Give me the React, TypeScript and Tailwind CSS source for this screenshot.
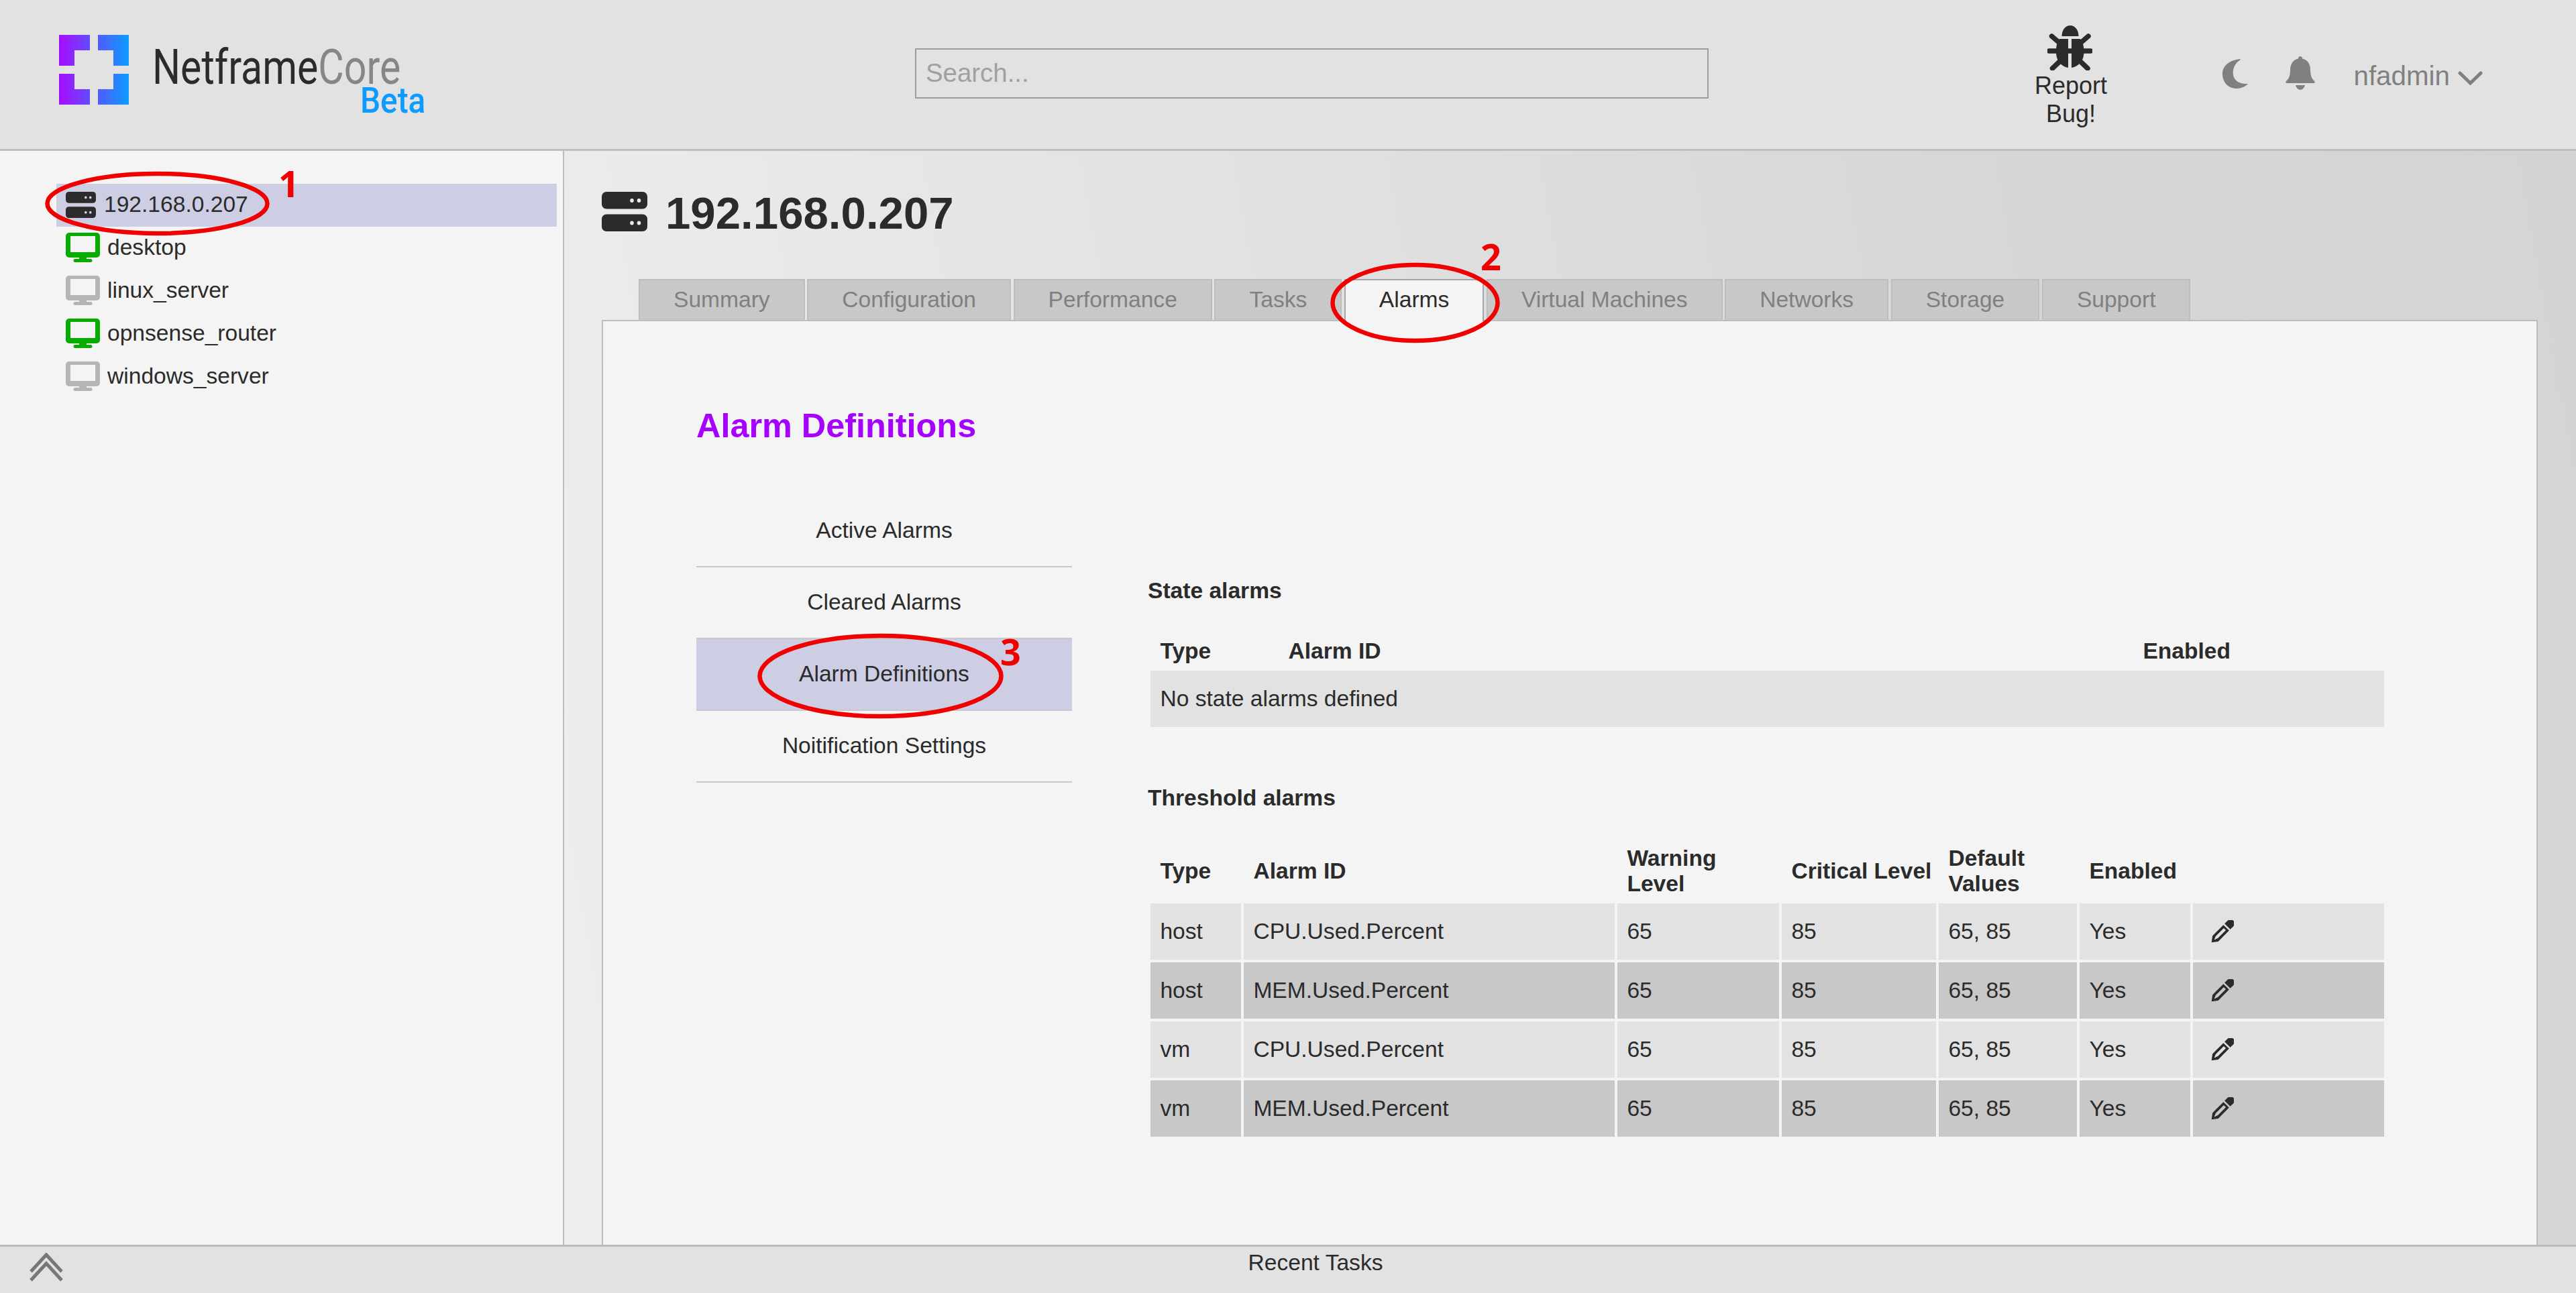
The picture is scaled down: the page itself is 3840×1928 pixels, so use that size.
import React from 'react';

const tabs = ['Summary', 'Configuration', 'Performance', 'Tasks', 'Alarms', 'Virtual Machines', 'Networks', 'Storage', 'Support'];
const hosts = [
  { name: 'desktop', color: 'text-[#06ad00]' },
  { name: 'linux_server', color: 'text-[#b5b5b5]' },
  { name: 'opnsense_router', color: 'text-[#06ad00]' },
  { name: 'windows_server', color: 'text-[#b5b5b5]' },
];
const menu = ['Active Alarms', 'Cleared Alarms', 'Alarm Definitions', 'Noitification Settings'];
const thresholds = [
  { type: 'host', id: 'CPU.Used.Percent' },
  { type: 'host', id: 'MEM.Used.Percent' },
  { type: 'vm', id: 'CPU.Used.Percent' },
  { type: 'vm', id: 'MEM.Used.Percent' },
];

function Logo() {
  return (
    <svg width="104" height="104" viewBox="0 0 104 104">
      <defs>
        <linearGradient id="logo" x1="0" y1="0" x2="1" y2="0">
          <stop offset="0" stopColor="#a80cff" />
          <stop offset="1" stopColor="#0d9bff" />
        </linearGradient>
      </defs>
      <path
        fill="url(#logo)"
        d="M0 0H46V23H23V46H0ZM58 0H104V46H81V23H58ZM0 58H23V81H46V104H0ZM81 58H104V104H58V81H81Z"
      />
    </svg>
  );
}

// two stacked drives, the dots are holes so the row colour shows through
function ServerIcon({ className }: { className: string }) {
  return (
    <svg className={className} viewBox="0 0 68 59" fill="currentColor" fillRule="evenodd">
      <path d="M7 0H61A7 7 0 0 1 68 7V18.5A7 7 0 0 1 61 25.5H7A7 7 0 0 1 0 18.5V7A7 7 0 0 1 7 0ZM45 10A2.8 3 0 1 0 45 16A2.8 3 0 1 0 45 10ZM55.5 10A2.8 3 0 1 0 55.5 16A2.8 3 0 1 0 55.5 10Z" />
      <path d="M7 33.5H61A7 7 0 0 1 68 40.5V52A7 7 0 0 1 61 59H7A7 7 0 0 1 0 52V40.5A7 7 0 0 1 7 33.5ZM45 43.5A2.8 3 0 1 0 45 49.5A2.8 3 0 1 0 45 43.5ZM55.5 43.5A2.8 3 0 1 0 55.5 49.5A2.8 3 0 1 0 55.5 43.5Z" />
    </svg>
  );
}

function MonitorIcon({ className }: { className: string }) {
  return (
    <svg className={className} viewBox="0 0 51 44" fill="currentColor" fillRule="evenodd">
      <path d="M5 0H46A5 5 0 0 1 51 5V32A5 5 0 0 1 46 37H5A5 5 0 0 1 0 32V5A5 5 0 0 1 5 0ZM7 5V29H44V5Z" />
      <path d="M20 37H31V39H37A2.5 2.5 0 0 1 37 44H14A2.5 2.5 0 0 1 14 39H20Z" />
    </svg>
  );
}

function BugIcon() {
  return (
    <svg className="h-[67px] w-[67px]" viewBox="0 0 67 67" fill="currentColor">
      <path d="M21.5 16C21.5 7 26.5 0 34 0C41.5 0 46.5 7 46.5 16Z" />
      <path d="M18 20H31V63C20 61 13 52 13 40C13 31 14 25 18 20Z" />
      <path d="M36 20H49C53 25 54.5 31 54.5 40C54.5 52 47 61 36 63Z" />
      <path
        d="M6.5 16L21 28.5M61 16L46.5 28.5M2.5 38H64.5M7.5 64L20 52M60 64L47.5 52"
        fill="none"
        stroke="currentColor"
        strokeWidth="7.5"
        strokeLinecap="round"
      />
    </svg>
  );
}

function MoonIcon() {
  return (
    <svg className="h-[45px] w-[38px] shrink-0" viewBox="0 0 38 45" fill="currentColor">
      <path d="M26 1C10 3 0 11 0 23C0 36 9 45 21 45C28 45 34 42 38 38C26 39 15.7 33 15.7 22C15.7 13 20 6 27 2Z" />
    </svg>
  );
}

function BellIcon() {
  return (
    <svg className="mt-[-3px] ml-[56px] h-[50px] w-[44px] shrink-0" viewBox="0 0 44 50" fill="currentColor">
      <path d="M22 0C24 0 25 1.5 25 3.5C33 5 37 12 37 20C37 29 39 33 43 37C44.5 38.5 43.5 40 42 40H2C0.5 40 -0.5 38.5 1 37C5 33 7 29 7 20C7 12 11 5 19 3.5C19 1.5 20 0 22 0Z" />
      <path d="M15 43H29C28 47 25 50 22 50C19 50 16 47 15 43Z" />
    </svg>
  );
}

function PencilIcon() {
  return (
    <svg className="block h-[34px] w-[34px]" viewBox="0 0 34 34" fill="currentColor" fillRule="evenodd">
      <g transform="translate(0.7 33.3) rotate(-45)">
        <path d="M0 0L8 -6H31V6H8ZM5.5 0L11 2.2H28V-2.2H11Z" />
        <path d="M33.5 -6H40A6 6 0 0 1 40 6H33.5Z" />
      </g>
    </svg>
  );
}

export default function App() {
  return (
    <div className="relative flex h-[1928px] w-[3840px] flex-col overflow-hidden bg-[#f4f4f4] font-['Liberation_Sans',sans-serif] text-[33.6px] text-[#2b2b2b]">
      {/* top bar */}
      <header className="flex h-[225px] shrink-0 border-b-[3px] border-[#bdbdbd] bg-[#e2e2e2]">
        <div className="flex w-[1364px] shrink-0 pl-[88px] pt-[52px]">
          <Logo />
          <div className="ml-[35px] mt-[9px] h-[110px] w-[420px]">
            <div className="origin-left scale-x-[0.82] whitespace-nowrap font-['Roboto',sans-serif] text-[72px] leading-[80px]">
              <span className="text-[#2b2b2b]">Netframe</span>
              <span className="text-[#868686]">Core</span>
            </div>
            <div className="ml-[310px] mt-[-15px] origin-left scale-x-[0.9] font-['Roboto',sans-serif] text-[53px] leading-[48px] font-medium text-[#0d9bff]">
              Beta
            </div>
          </div>
        </div>
        <div className="mt-[72px] h-[75px] w-[1183px] shrink-0 border-[2.4px] border-[#9c9c9c] pl-[14px] text-[38.4px] leading-[70px] text-[#a0a0a0]">
          Search...
        </div>
        <div className="ml-[440px] flex w-[200px] shrink-0 flex-col items-center pt-[38px] text-[36px] leading-[41.5px]">
          <div className="mr-[3px]">
            <BugIcon />
          </div>
          <div className="mt-[2px] text-center">
            Report
            <br />
            Bug!
          </div>
        </div>
        <div className="ml-[126px] mt-[87px] flex h-[50px] items-start text-[#808080]">
          <MoonIcon />
          <BellIcon />
          <span className="ml-[57.5px] mt-[4px] text-[40.3px] leading-[46px]">nfadmin</span>
          <svg className="ml-[12px] mt-[19px] shrink-0" width="37" height="21" viewBox="0 0 37 21" fill="none" stroke="currentColor" strokeWidth="5" strokeLinecap="round">
            <path d="M3 3L18.5 18L34 3" />
          </svg>
        </div>
      </header>

      <div className="flex min-h-0 flex-1">
        {/* host tree */}
        <aside className="w-[841px] shrink-0 border-r-[2.4px] border-[#bdbdbd] pl-[84px] pr-[9px] pt-[49px]">
          <div className="flex h-[64px] items-center bg-[#cdcee3] pb-[2px] pl-[14px]">
            <ServerIcon className="h-[39px] w-[45px]" />
            <span className="ml-[12px]">192.168.0.207</span>
          </div>
          {hosts.map((host) => (
            <div key={host.name} className="flex h-[64px] items-center pb-[2px] pl-[14px]">
              <MonitorIcon className={`h-[44px] w-[51px] ${host.color}`} />
              <span className="ml-[11px]">{host.name}</span>
            </div>
          ))}
        </aside>

        {/* main area */}
        <main className="flex min-w-0 flex-1 flex-col bg-[linear-gradient(260deg,#d4d4d4,#d6d6d6_25%,#e3e3e3_65%,#eeeeee)] pl-[56px] pr-[57px]">
          <div className="flex h-[191px] shrink-0 items-start pt-[54px]">
            <ServerIcon className="mt-[7px] h-[59px] w-[68px]" />
            <h1 className="ml-[27px] text-[67.2px] leading-[77px] font-bold">192.168.0.207</h1>
          </div>
          <div className="relative z-10 flex h-[63px] shrink-0 gap-[3.6px] pl-[55px]">
            {tabs.map((tab) =>
              tab === 'Alarms' ? (
                <div key={tab} className="border-x-[2.4px] border-t-[2.4px] border-[#a5a5a5] bg-[#f4f4f4] px-[50px] leading-[58px]">
                  {tab}
                </div>
              ) : (
                <div key={tab} className="border-[2.4px] border-[#bdbdbd] bg-[#c8c8c8] px-[50px] leading-[58px] text-[#808080]">
                  {tab}
                </div>
              ),
            )}
          </div>
          <section className="mt-[-2px] min-h-0 flex-1 border-x-[2.4px] border-t-[2.4px] border-[#bdbdbd] bg-[#f4f4f4] pl-[139px] pt-[127px]">
            <h2 className="text-[50.4px] leading-[58px] font-bold text-[#a600ff]">Alarm Definitions</h2>
            <div className="mt-[75px] flex">
              <nav className="w-[560px] shrink-0">
                {menu.map((item) => (
                  <div
                    key={item}
                    className={`h-[107px] border-b-[2.4px] border-[#c8c8c8] pt-[27px] text-center ${item === 'Alarm Definitions' ? 'bg-[#cdcee3]' : ''}`}
                  >
                    {item}
                  </div>
                ))}
              </nav>
              <div className="ml-[113px] w-[1847px] shrink-0 pt-[122px]">
                <h3 className="leading-[39px] font-bold">State alarms</h3>
                <table className="mt-[42px] w-full table-fixed border-separate border-spacing-[4.8px] text-left">
                  <colgroup>
                    <col className="w-[187px]" />
                    <col className="w-[1270px]" />
                    <col />
                  </colgroup>
                  <thead>
                    <tr className="font-bold">
                      <th className="h-[46px] px-[14.4px]">Type</th>
                      <th className="h-[46px] px-[14.4px]">Alarm ID</th>
                      <th className="h-[46px] px-[14.4px]">Enabled</th>
                    </tr>
                  </thead>
                  <tbody>
                    <tr>
                      <td colSpan={3} className="h-[84px] bg-[#e2e2e2] px-[14.4px]">
                        No state alarms defined
                      </td>
                    </tr>
                  </tbody>
                </table>
                <h3 className="mt-[82px] leading-[39px] font-bold">Threshold alarms</h3>
                <table className="mt-[42px] w-full table-fixed border-separate border-spacing-[4.8px] text-left">
                  <colgroup>
                    <col className="w-[135px]" />
                    <col className="w-[553px]" />
                    <col className="w-[241px]" />
                    <col className="w-[230px]" />
                    <col className="w-[206px]" />
                    <col className="w-[165px]" />
                    <col />
                  </colgroup>
                  <thead>
                    <tr className="font-bold leading-[38.4px]">
                      <th className="h-[88px] px-[14.4px]">Type</th>
                      <th className="h-[88px] px-[14.4px]">Alarm ID</th>
                      <th className="h-[88px] px-[14.4px]">Warning Level</th>
                      <th className="h-[88px] pl-[14.4px] pr-0">Critical Level</th>
                      <th className="h-[88px] px-[14.4px]">Default Values</th>
                      <th className="h-[88px] px-[14.4px]">Enabled</th>
                      <th className="h-[88px]"></th>
                    </tr>
                  </thead>
                  <tbody>
                    {thresholds.map((row, i) => (
                      <tr key={i} className={i % 2 === 0 ? 'bg-[#e2e2e2]' : 'bg-[#c8c8c8]'}>
                        <td className="h-[84px] px-[14.4px]">{row.type}</td>
                        <td className="h-[84px] px-[14.4px]">{row.id}</td>
                        <td className="h-[84px] px-[14.4px]">65</td>
                        <td className="h-[84px] px-[14.4px]">85</td>
                        <td className="h-[84px] px-[14.4px]">65, 85</td>
                        <td className="h-[84px] px-[14.4px]">Yes</td>
                        <td className="h-[84px] px-[27px]">
                          <PencilIcon />
                        </td>
                      </tr>
                    ))}
                  </tbody>
                </table>
              </div>
            </div>
          </section>
        </main>
      </div>

      {/* recent tasks bar */}
      <footer className="relative flex h-[72px] shrink-0 justify-center border-t-[3px] border-[#bdbdbd] bg-[#e2e2e2] pt-[4px]">
        <svg className="absolute left-[43px] top-[9px]" width="52" height="44" viewBox="0 0 52 44" fill="none" stroke="#777" strokeWidth="5">
          <path d="M3 28L26 3L49 28M3 41L26 16L49 41" />
        </svg>
        <span className="ml-[82px] leading-[39px]">Recent Tasks</span>
      </footer>

      {/* red marks drawn over the screenshot */}
      <svg className="pointer-events-none absolute left-0 top-0 z-20" width="3840" height="1928" fill="none" stroke="#f00000" strokeWidth="6.5">
        <ellipse cx="234.5" cy="303.5" rx="164" ry="44.5" />
        <ellipse cx="2109.5" cy="451.5" rx="123" ry="56.5" />
        <ellipse cx="1312.5" cy="1008" rx="180" ry="60" />
      </svg>
      <span className="absolute left-[415px] top-[243px] z-20 font-['Open_Sans',sans-serif] text-[54px] leading-[60px] font-bold text-[#f00000]">1</span>
      <span className="absolute left-[2207px] top-[352px] z-20 font-['Open_Sans',sans-serif] text-[54px] leading-[60px] font-bold text-[#f00000]">2</span>
      <span className="absolute left-[1491px] top-[941px] z-20 font-['Open_Sans',sans-serif] text-[54px] leading-[60px] font-bold text-[#f00000]">3</span>
    </div>
  );
}
